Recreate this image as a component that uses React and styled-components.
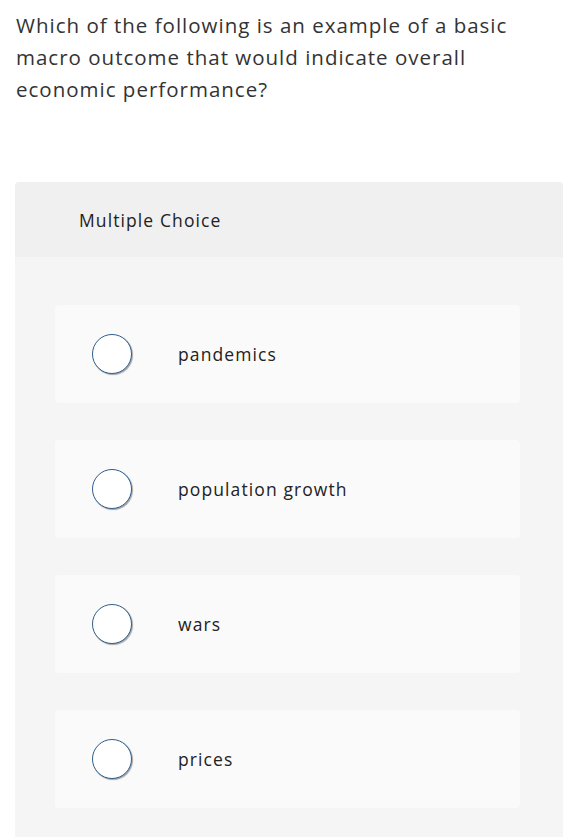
import React from "react";
import styled, { createGlobalStyle } from "styled-components";

const Global = createGlobalStyle`
  html, body { margin: 0; padding: 0; background: #ffffff; }
  body { font-family: "Open Sans", "Lato", sans-serif; color: #333333; }
`;

const Page = styled.div`
  padding: 9px 0 0 0;
`;

const Question = styled.p`
  margin: 0 0 77px 0;
  padding: 0 40px 0 16px;
  font-size: 20.5px;
  letter-spacing: 1px;
  line-height: 32px;
  color: #333333;
`;

const Panel = styled.section`
  margin-left: 15px;
  width: 548px;
  border-radius: 4px 4px 0 0;
  overflow: hidden;
  background: #f5f5f5;
`;

const Header = styled.div`
  height: 75px;
  background: #f0f0f0;
  display: flex;
  align-items: center;
  padding-left: 64px;
  font-size: 17.5px;
  letter-spacing: 1.1px;
  color: #222222;
`;

const Body = styled.div`
  padding: 48px 43px 40px 40px;
  display: flex;
  flex-direction: column;
  gap: 37px;
`;

const Option = styled.label`
  height: 98px;
  background: #fafafa;
  border-radius: 4px;
  display: flex;
  align-items: center;
  padding-left: 37px;
  cursor: pointer;
`;

const Radio = styled.span`
  width: 38px;
  height: 38px;
  border-radius: 50%;
  border: 1.5px solid #2e5f8e;
  background: #ffffff;
  box-shadow: 1px 1px 1px rgba(0, 0, 0, 0.35);
  flex: none;
`;

const OptionText = styled.span`
  margin-left: 46px;
  font-size: 17.5px;
  letter-spacing: 1.1px;
  color: #222222;
`;

const options = ["pandemics", "population growth", "wars", "prices"];

export default function App() {
  return (
    <Page>
      <Global />
      <Question>
        Which of the following is an example of a basic macro outcome that would indicate overall economic performance?
      </Question>
      <Panel>
        <Header>Multiple Choice</Header>
        <Body>
          {options.map((o) => (
            <Option key={o}>
              <Radio />
              <OptionText>{o}</OptionText>
            </Option>
          ))}
        </Body>
      </Panel>
    </Page>
  );
}
